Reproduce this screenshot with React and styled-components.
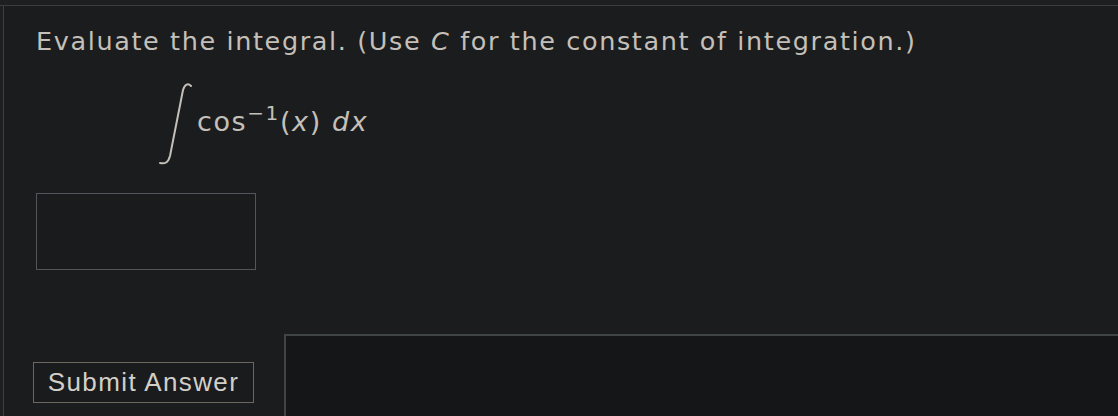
import React from "react";
import styled, { createGlobalStyle } from "styled-components";

const Global = createGlobalStyle`
  html, body { margin: 0; padding: 0; background: #1e1f21; overflow: hidden; }
  body { width: 1118px; height: 416px; }
`;

const Frame = styled.div`
  width: 1118px;
  height: 416px;
  display: flex;
  flex-direction: column;
  background: #1e1f21;
  overflow: hidden;
`;

const TopStrip = styled.div`
  height: 5px;
  flex: none;
  border-bottom: 1px solid #3a3d40;
`;

const Body = styled.div`
  flex: 1;
  display: flex;
  padding-left: 3px;
  min-height: 0;
`;

const Panel = styled.div`
  flex: 1;
  border-left: 1px solid #394042;
  background: #1b1c1e;
  padding: 21px 0 0 32px;
  display: flex;
  flex-direction: column;
  min-width: 0;
  & > * { flex: none; }
`;

const Question = styled.p`
  margin: 0;
  font-family: "DejaVu Sans", Verdana, sans-serif;
  font-size: 25.5px;
  letter-spacing: 1.62px;
  line-height: 29px;
  color: #c4c0b9;
  white-space: nowrap;
  & em { font-style: italic; }
`;

const MathLine = styled.div`
  display: flex;
  align-items: center;
  margin: 27px 0 0 122px;
  height: 82px;
  color: #c4c0b9;
  font-family: "DejaVu Sans", Verdana, sans-serif;
`;

const IntegralSign = styled.svg`
  width: 36px;
  height: 82px;
  flex: none;
`;

const Expr = styled.span`
  font-size: 27px;
  letter-spacing: 1.6px;
  margin-left: 3px;
  margin-top: -6px;
  white-space: nowrap;
  & sup { font-size: 20px; vertical-align: 0; position: relative; top: -11px; }
  & i { font-style: italic; }
`;

const AnswerInput = styled.input`
  margin: 28px 0 0 0;
  width: 220px;
  height: 77px;
  box-sizing: border-box;
  border: 1px solid #50565b;
  background: #1a1b1d;
  color: #c4c0b9;
  outline: none;
`;

const BottomRow = styled.div`
  display: flex;
  align-items: flex-start;
  margin-top: 64px;
  margin-left: -3px;
`;

const SubmitButton = styled.button`
  margin-top: 28px;
  width: 221px;
  height: 41px;
  box-sizing: border-box;
  border: 1px solid #6c665e;
  background: #1a1b1d;
  color: #d2cfc8;
  font-family: "Liberation Sans", Arial, sans-serif;
  font-size: 26px;
  letter-spacing: 1.4px;
  padding: 0;
  cursor: pointer;
`;

const ResultBox = styled.div`
  flex: 1;
  margin-left: 30px;
  height: 120px;
  border-top: 2px solid #3f4547;
  border-left: 2px solid #3f4547;
  background: #151618;
`;

export default function App() {
  return (
    <>
      <Global />
      <Frame>
        <TopStrip />
        <Body>
          <Panel>
            <Question>
              Evaluate the integral. (Use <em>C</em> for the constant of integration.)
            </Question>
            <MathLine>
              <IntegralSign viewBox="0 0 36 82">
                <path
                  d="M33 3 C30 0 27 1 25 7 L12 73 C10 80 7 81 2 80"
                  fill="none"
                  stroke="#c4c0b9"
                  strokeWidth="2"
                  strokeLinecap="round"
                />
              </IntegralSign>
              <Expr>
                cos<sup>−1</sup>(<i>x</i>) <i>dx</i>
              </Expr>
            </MathLine>
            <AnswerInput type="text" aria-label="answer" />
            <BottomRow>
              <SubmitButton>Submit Answer</SubmitButton>
              <ResultBox />
            </BottomRow>
          </Panel>
        </Body>
      </Frame>
    </>
  );
}
